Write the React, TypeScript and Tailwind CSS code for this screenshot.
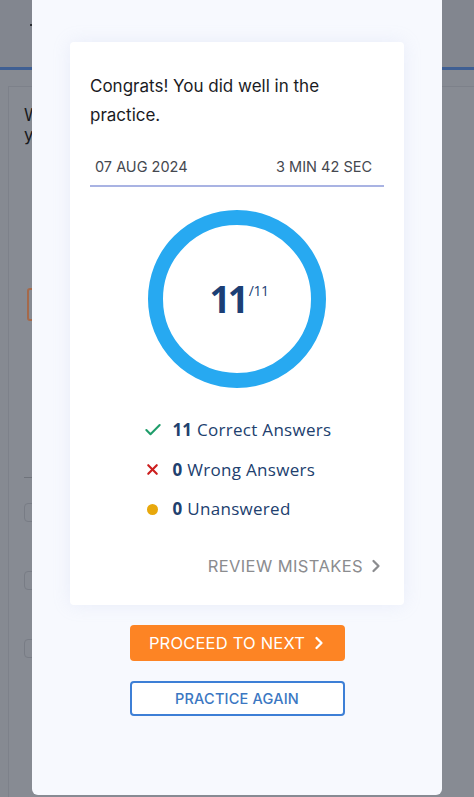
import { Check, X, ChevronRight } from "lucide-react";

const stats = [
  { value: "11", label: "Correct Answers", kind: "correct" },
  { value: "0", label: "Wrong Answers", kind: "wrong" },
  { value: "0", label: "Unanswered", kind: "skipped" },
];

function StatIcon({ kind }: { kind: string }) {
  if (kind === "correct") {
    return <Check aria-hidden="true" className="h-[20px] w-[20px] text-[#1f9d6a]" strokeWidth={2.5} />;
  }
  if (kind === "wrong") {
    return <X aria-hidden="true" className="h-[17px] w-[17px] text-[#cc1f1f]" strokeWidth={3} />;
  }
  return <span className="block h-[11px] w-[11px] rounded-full bg-[#e8a80c]" />;
}

function ScoreRing() {
  return (
    <div className="relative mx-auto h-[178px] w-[178px]">
      <svg viewBox="0 0 178 178" className="h-full w-full">
        <circle cx="89" cy="89" r="81.5" fill="none" stroke="#27a9f1" strokeWidth="15" />
      </svg>
      <div className="absolute inset-0 flex items-center justify-center pb-[2px] pl-[4px] font-['Open_Sans',sans-serif] text-[#1c3f75]">
        <span className="text-[37px] font-bold leading-none tracking-[-3px]">11</span>
        <span className="mb-[14px] ml-[3px] text-[14px] leading-none tracking-[-0.5px]">/11</span>
      </div>
    </div>
  );
}

export default function App() {
  return (
    <div className="relative h-[797px] w-[474px] overflow-hidden bg-[#868a92] font-['Inter',sans-serif]">
      {/* page behind the dialog, dimmed */}
      <div className="h-[67px] bg-[#82868f] pl-[30px] pt-[24px]">
        <span className="block h-[2px] w-[3px] bg-[#2a2d33]" />
      </div>
      <div className="h-[3px] bg-[#3f5f93]" />
      <div className="ml-[8px] mt-[16px] h-[720px] border-l border-t border-[#7d818a] bg-[#878b93] pl-[15px] pt-[18px]">
        <p className="text-[17px] leading-[20px] text-[#17191d]">W</p>
        <p className="text-[17px] leading-[20px] text-[#17191d]">y</p>
        <div className="ml-[3px] mt-[143px] h-[33px] w-[40px] rounded-[3px] border-2 border-[#a5694a]" />
        <div className="mt-[156px] h-px w-[30px] bg-[#6f737b]" />
        <div className="mt-[25px] flex flex-col gap-[49px]">
          <span className="block h-[19px] w-[19px] rounded-[4px] border border-[#787c85]" />
          <span className="block h-[19px] w-[19px] rounded-[4px] border border-[#787c85]" />
          <span className="block h-[19px] w-[19px] rounded-[4px] border border-[#787c85]" />
        </div>
      </div>

      {/* dialog */}
      <div className="absolute left-[32px] top-0 flex h-[795px] w-[410px] flex-col items-center rounded-b-[6px] bg-[#f7f9fe] pt-[42px]">
        <div className="w-[334px] rounded-[4px] bg-white px-[20px] pb-[28px] pt-[30px] shadow-[0_0_18px_rgba(170,185,225,0.18)]">
          <p className="text-[17px] leading-[29px] text-[#1b1c1f]">
            Congrats! You did well in the practice.
          </p>
          <div className="mt-[27px] flex justify-between border-b-2 border-[#a9b3e3] pb-[8px] pl-[5px] pr-[12px] text-[14.5px] leading-[20px] text-[#45484f]">
            <span>07 AUG 2024</span>
            <span>3 MIN 42 SEC</span>
          </div>
          <div className="mt-[23px]">
            <ScoreRing />
          </div>
          <div className="mx-auto mt-[30px] flex w-fit flex-col gap-[15.5px] font-['Open_Sans',sans-serif] text-[17px] leading-[24px] text-[#21406e]">
            {stats.map((s) => (
              <div key={s.label} className="flex items-center">
                <span className="flex w-[30px] items-center justify-center pr-[10px]">
                  <StatIcon kind={s.kind} />
                </span>
                <span className="font-bold">{s.value}</span>
                <span className="ml-[5px] tracking-[0.3px]">{s.label}</span>
              </div>
            ))}
          </div>
          <div className="mt-[34px] flex items-center justify-end gap-[3px] text-[16.5px] leading-[22px] tracking-[0.4px] text-[#8b8c8f]">
            <span>REVIEW MISTAKES</span>
            <ChevronRight aria-hidden="true" className="mr-[-2px] h-[20px] w-[20px]" strokeWidth={2.75} />
          </div>
        </div>

        <button
          type="button"
          className="mt-[20px] flex h-[36px] w-[215px] items-center justify-center gap-[4px] rounded-[4px] bg-[#fd8424] pl-[4px] text-[16.5px] tracking-[0.2px] text-white"
        >
          PROCEED TO NEXT
          <ChevronRight aria-hidden="true" className="h-[20px] w-[20px]" strokeWidth={2.75} />
        </button>
        <button
          type="button"
          className="mt-[20px] h-[35px] w-[215px] rounded-[4px] border-2 border-[#3d7fd6] bg-white text-[14.5px] font-medium tracking-[0.2px] text-[#3b77c2]"
        >
          PRACTICE AGAIN
        </button>
      </div>
    </div>
  );
}
